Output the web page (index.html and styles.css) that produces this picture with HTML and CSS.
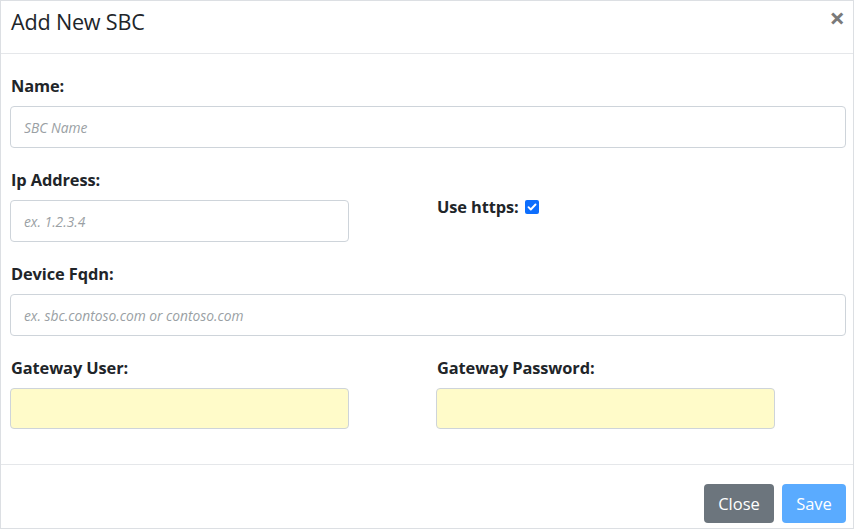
FILE: index.html
```html
<!DOCTYPE html>
<html>
<head>
<meta charset="utf-8">
<link rel="stylesheet" href="styles.css">
</head>
<body>
<div class="modal">
  <div class="modal-header">
    <h5 class="title">Add New SBC</h5>
    <span class="close">×</span>
  </div>
  <div class="modal-body">
    <div class="group">
      <label class="lbl">Name:</label>
      <input class="ctl" type="text" placeholder="SBC Name">
    </div>
    <div class="row">
      <div class="group">
        <label class="lbl">Ip Address:</label>
        <input class="ctl half" type="text" placeholder="ex. 1.2.3.4">
      </div>
      <div class="https">
        <span class="lbl">Use https:</span>
        <span class="check"><svg width="14" height="14" viewBox="0 0 14 14"><path d="M3.5 7.2 L5.8 9.5 L10.5 4.5" fill="none" stroke="#fff" stroke-width="1.9" stroke-linecap="round" stroke-linejoin="round"/></svg></span>
      </div>
    </div>
    <div class="group">
      <label class="lbl">Device Fqdn:</label>
      <input class="ctl" type="text" placeholder="ex. sbc.contoso.com or contoso.com">
    </div>
    <div class="row last">
      <div class="group">
        <label class="lbl">Gateway User:</label>
        <input class="ctl half auto" type="text">
      </div>
      <div class="group">
        <label class="lbl">Gateway Password:</label>
        <input class="ctl half auto" type="password">
      </div>
    </div>
  </div>
  <div class="modal-footer">
    <button class="btn btn-close">Close</button>
    <button class="btn btn-save">Save</button>
  </div>
</div>
</body>
</html>
```

FILE: styles.css
```css
html, body {
  margin: 0;
  padding: 0;
  background: #fff;
}
body {
  font-family: "Open Sans", "Noto Sans", sans-serif;
  color: #212529;
}
.modal {
  width: 854px;
  height: 529px;
  box-sizing: border-box;
  border: 1px solid #dcdfe3;
  display: flex;
  flex-direction: column;
}
.modal-header {
  height: 52px;
  flex: none;
  border-bottom: 1px solid #e5e7ea;
  display: flex;
  align-items: flex-start;
  justify-content: space-between;
  padding: 0 8px 0 10px;
}
.title {
  margin: 0;
  font-size: 21.6px;
  font-weight: 400;
  line-height: 28px;
  padding-top: 7px;
  letter-spacing: -0.2px;
}
.close {
  font-size: 27px;
  font-weight: 700;
  line-height: 24px;
  color: #7a7a7a;
  padding-top: 5px;
}
.modal-body {
  flex: 1;
  padding: 20px 7px 0 9px;
}
.group {
  display: flex;
  flex-direction: column;
  margin-bottom: 20px;
}
.lbl {
  font-weight: 700;
  font-size: 16.4px;
  line-height: 24px;
  height: 24px;
  margin-bottom: 8px;
  padding-left: 1px;
  letter-spacing: -0.1px;
}
.ctl {
  box-sizing: border-box;
  height: 42px;
  width: 100%;
  border: 1px solid #ced4da;
  border-radius: 4px;
  padding: 0 13px;
  font-family: inherit;
  font-size: 13.8px;
  background: #fff;
  outline: none;
  margin: 0;
}
.ctl::placeholder {
  color: #9a9fa4;
  font-style: italic;
}
.half {
  width: 339px;
}
.auto {
  background: #fffbc9;
  height: 41px;
}
.row {
  display: grid;
  grid-template-columns: 426px 1fr;
}
.row.last .group {
  margin-bottom: 0;
}
.https {
  display: flex;
  align-items: center;
  padding-top: 27px;
  height: 24px;
}
.https .lbl {
  margin-bottom: 0;
}
.check {
  width: 14px;
  height: 14px;
  border-radius: 2px;
  background: #0d6efd;
  margin-left: 6px;
  display: flex;
}
.modal-footer {
  height: 64px;
  flex: none;
  box-sizing: border-box;
  border-top: 1px solid #e5e7ea;
  display: flex;
  justify-content: flex-end;
  align-items: flex-start;
  gap: 8px;
  padding: 19px 7px 0 0;
}
.btn {
  height: 39px;
  border: none;
  border-radius: 4px;
  color: #fff;
  font-family: inherit;
  font-size: 16.5px;
  padding: 0;
  line-height: 39px;
}
.btn-close {
  background: #6c757d;
  width: 70px;
}
.btn-save {
  background: #5aabff;
  width: 64px;
}
```
